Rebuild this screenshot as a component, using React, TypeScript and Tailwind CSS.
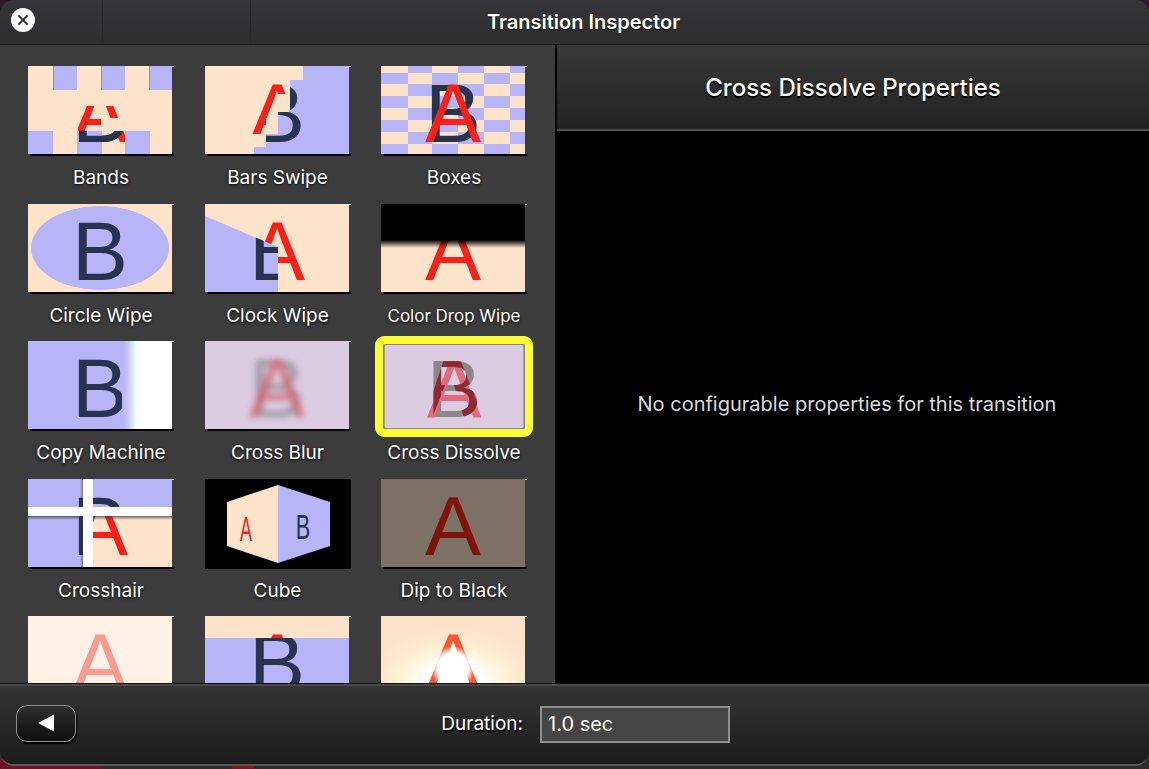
import React from "react";

const PEACH = "#fee3cb";
const LAV = "#b7b4f8";
const RED = "#f7211a";
const NAVY = "#283350";

function LetterA({ fill = RED, opacity = 1 }: { fill?: string; opacity?: number }) {
  return (
    <text x="72" y="76" textAnchor="middle" fontSize="84" fontFamily="'Liberation Sans', sans-serif" fill={fill} opacity={opacity}>
      A
    </text>
  );
}

function LetterB({ fill = NAVY, opacity = 1 }: { fill?: string; opacity?: number }) {
  return (
    <text x="72" y="76" textAnchor="middle" fontSize="84" fontFamily="'Liberation Sans', sans-serif" fill={fill} opacity={opacity}>
      B
    </text>
  );
}

function Bands() {
  const top = [25, 73, 121];
  const bottom = [0, 49, 97];
  return (
    <>
      <rect width="144" height="88" fill={PEACH} />
      <LetterB />
      <rect width="144" height="24" y="0" fill={LAV} />
      {[0, 49, 97].map((x) => (
        <rect key={x} x={x} y="0" width="25" height="24" fill={PEACH} />
      ))}
      <rect y="24" width="144" height="41" fill={PEACH} />
      <clipPath id="bandA">
        <rect x="0" y="0" width="50" height="52" />
        <rect x="73" y="40" width="50" height="12" />
        <rect x="73" y="65" width="50" height="23" />
        <rect x="50" y="40" width="23" height="48" />
      </clipPath>
      <g clipPath="url(#bandA)">
        <LetterA />
      </g>
      {bottom.map((x) => (
        <rect key={x} x={x} y="65" width="25" height="23" fill={LAV} />
      ))}
      {top.map((x) => (
        <rect key={x} x={x} y="0" width="1" height="24" fill="#8f8cc8" />
      ))}
      <clipPath id="bandB">
        <rect x="49" y="65" width="48" height="23" />
      </clipPath>
      <g clipPath="url(#bandB)">
        <LetterB />
      </g>
      <rect x="73" y="65" width="24" height="23" fill={PEACH} opacity="0" />
    </>
  );
}

function BarsSwipe() {
  return (
    <>
      <rect width="144" height="88" fill={LAV} />
      <LetterB />
      <path d="M0 0H98V14H85V46H73V68H61V81H49V88H0Z" fill={PEACH} />
      <clipPath id="barsA">
        <path d="M0 0H98V14H85V28H73V52H61V68H0Z" />
      </clipPath>
      <g clipPath="url(#barsA)">
        <LetterA />
      </g>
    </>
  );
}

function Boxes() {
  const xs = [0, 27, 51, 77, 103, 129];
  const ys = [0, 7, 18, 30, 42, 54, 66, 78];
  const widths = [27, 24, 26, 26, 26, 15];
  const heights = [7, 11, 12, 12, 12, 12, 12, 10];
  return (
    <>
      {ys.map((y, r) =>
        xs.map((x, c) => (
          <rect key={`${r}-${c}`} x={x} y={y} width={widths[c]} height={heights[r]} fill={(r + c) % 2 === 0 ? PEACH : LAV} />
        ))
      )}
      <LetterB />
      <LetterA />
    </>
  );
}

function CircleWipe() {
  return (
    <>
      <rect width="144" height="88" fill={PEACH} />
      <ellipse cx="72" cy="44" rx="69" ry="42" fill={LAV} />
      <LetterB />
    </>
  );
}

function ClockWipe() {
  return (
    <>
      <rect width="144" height="88" fill={PEACH} />
      <LetterA />
      <path d="M0 12L73 43V88H0Z" fill={LAV} />
      <clipPath id="clockB">
        <path d="M0 12L73 43V88H0Z" />
      </clipPath>
      <g clipPath="url(#clockB)">
        <LetterB />
      </g>
    </>
  );
}

function ColorDrop() {
  return (
    <>
      <defs>
        <linearGradient id="dropFade" x1="0" y1="0" x2="0" y2="1">
          <stop offset="0" stopColor="#000" />
          <stop offset="1" stopColor="#000" stopOpacity="0" />
        </linearGradient>
      </defs>
      <rect width="144" height="88" fill={PEACH} />
      <LetterA />
      <rect width="144" height="36" fill="#000" />
      <rect y="36" width="144" height="8" fill="url(#dropFade)" />
    </>
  );
}

function CopyMachine() {
  return (
    <>
      <defs>
        <linearGradient id="copyFade" x1="0" y1="0" x2="1" y2="0">
          <stop offset="0" stopColor={LAV} />
          <stop offset="0.3" stopColor="#c6c4fb" />
          <stop offset="0.75" stopColor="#eefcff" />
          <stop offset="1" stopColor="#fff" />
        </linearGradient>
      </defs>
      <rect width="144" height="88" fill={LAV} />
      <LetterB />
      <rect x="94" width="50" height="88" fill="#fff" />
      <rect x="94" width="18" height="88" fill="url(#copyFade)" />
    </>
  );
}

function CrossBlur() {
  return (
    <>
      <rect width="144" height="88" fill="#dbcce2" />
      <defs>
        <filter id="blurA" x="-20%" y="-20%" width="140%" height="140%">
          <feGaussianBlur stdDeviation="3.2" />
        </filter>
      </defs>
      <g filter="url(#blurA)">
        <LetterB fill="#8f8a92" opacity={0.75} />
        <LetterA fill="#d2606c" opacity={0.8} />
      </g>
    </>
  );
}

function CrossDissolve() {
  return (
    <>
      <rect width="142" height="86" fill="#dbcce2" />
      <g transform="translate(-1 -2)">
        <LetterB fill="#8c8789" />
        <LetterA fill="#e46a80" />
        <clipPath id="dissolveB">
          <path d="M62 16L42 76H50L68 30L82 76H102L78 16Z" />
        </clipPath>
        <g clipPath="url(#dissolveB)">
          <LetterB fill="#8e2a33" />
        </g>
      </g>
    </>
  );
}

function Crosshair() {
  return (
    <>
      <defs>
        <linearGradient id="hairShadow" x1="0" y1="0" x2="0" y2="1">
          <stop offset="0" stopColor="#333" stopOpacity="0.7" />
          <stop offset="1" stopColor="#333" stopOpacity="0" />
        </linearGradient>
        <linearGradient id="hairShadowV" x1="1" y1="0" x2="0" y2="0">
          <stop offset="0" stopColor="#333" stopOpacity="0.5" />
          <stop offset="1" stopColor="#333" stopOpacity="0" />
        </linearGradient>
        <clipPath id="hairA">
          <rect x="65" y="37" width="79" height="51" />
        </clipPath>
        <clipPath id="hairB">
          <rect x="0" y="0" width="55" height="88" />
          <rect x="55" y="0" width="89" height="37" />
        </clipPath>
      </defs>
      <rect width="144" height="88" fill={LAV} />
      <rect x="65" y="37" width="79" height="51" fill={PEACH} />
      <g clipPath="url(#hairB)">
        <LetterB />
      </g>
      <g clipPath="url(#hairA)">
        <LetterA />
      </g>
      <rect x="52" width="3" height="88" fill="url(#hairShadowV)" />
      <rect y="37" width="144" height="4" fill="url(#hairShadow)" />
      <rect y="28" width="144" height="9" fill="#fff" />
      <rect x="55" width="10" height="88" fill="#fff" />
    </>
  );
}

function Cube() {
  return (
    <>
      <rect width="147" height="90" fill="#000" />
      <path d="M73 6L22 23V67L73 84Z" fill={PEACH} />
      <path d="M73 6L125 23V67L73 84Z" fill={LAV} />
      <text x="41" y="62" textAnchor="middle" fontSize="36" fontFamily="'Liberation Sans', sans-serif" fill={RED} transform="translate(41 0) scale(0.5 1) translate(-41 0) translate(0 0)">
        A
      </text>
      <text x="98" y="60" textAnchor="middle" fontSize="36" fontFamily="'Liberation Sans', sans-serif" fill={NAVY} transform="translate(98 0) scale(0.6 1) translate(-98 0)">
        B
      </text>
    </>
  );
}

function DipToBlack() {
  return (
    <>
      <rect width="144" height="88" fill="#7d7065" />
      <LetterA fill="#7f1209" />
    </>
  );
}

function FadeRow() {
  return (
    <>
      <rect width="144" height="88" fill="#fff1e6" />
      <LetterA fill="#fc9b92" />
    </>
  );
}

function SlideRow() {
  return (
    <>
      <rect width="144" height="88" fill={PEACH} />
      <LetterA />
      <rect y="22" width="144" height="66" fill={LAV} />
      <clipPath id="slideB">
        <rect y="22" width="144" height="66" />
      </clipPath>
      <g clipPath="url(#slideB)">
        <LetterB />
      </g>
    </>
  );
}

function FlashRow() {
  return (
    <>
      <defs>
        <radialGradient id="flash" cx="0.5" cy="0.75" r="0.65">
          <stop offset="0" stopColor="#fff" />
          <stop offset="0.3" stopColor="#fff" />
          <stop offset="0.6" stopColor="#fff3d6" stopOpacity="0.9" />
          <stop offset="1" stopColor={PEACH} stopOpacity="0" />
        </radialGradient>
        <radialGradient id="flashCore" cx="0.5" cy="0.5" r="0.5">
          <stop offset="0" stopColor="#fff" />
          <stop offset="0.7" stopColor="#fff" />
          <stop offset="1" stopColor="#fff" stopOpacity="0" />
        </radialGradient>
      </defs>
      <rect width="144" height="88" fill={PEACH} />
      <rect width="144" height="88" fill="url(#flash)" />
      <LetterA fill="#f9552f" />
      <circle cx="72" cy="52" r="22" fill="url(#flashCore)" />
      <rect x="60" y="60" width="24" height="10" fill="#fff" />
    </>
  );
}

const items: { name: string; art: React.ReactNode; small?: boolean; selected?: boolean; full?: boolean }[] = [
  { name: "Bands", art: <Bands /> },
  { name: "Bars Swipe", art: <BarsSwipe /> },
  { name: "Boxes", art: <Boxes /> },
  { name: "Circle Wipe", art: <CircleWipe /> },
  { name: "Clock Wipe", art: <ClockWipe /> },
  { name: "Color Drop Wipe", art: <ColorDrop />, small: true },
  { name: "Copy Machine", art: <CopyMachine /> },
  { name: "Cross Blur", art: <CrossBlur /> },
  { name: "Cross Dissolve", art: <CrossDissolve />, selected: true },
  { name: "Crosshair", art: <Crosshair /> },
  { name: "Cube", art: <Cube />, full: true },
  { name: "Dip to Black", art: <DipToBlack /> },
  { name: "Fade In", art: <FadeRow /> },
  { name: "Slide", art: <SlideRow /> },
  { name: "Flash", art: <FlashRow /> },
];

function Thumb({ item }: { item: (typeof items)[number] }) {
  if (item.selected) {
    return (
      <div className="relative w-[146px] h-[90px]">
        <div className="absolute left-[-6px] top-[-5px] w-[158px] h-[101px] rounded-[9px] border-[8px] border-[#fdfb33] bg-[#8b8590] p-px">
          <svg viewBox="0 0 142 85" className="w-full h-full rounded-[2px] block">
            {item.art}
          </svg>
        </div>
      </div>
    );
  }
  return (
    <div className="relative w-[146px] h-[90px]">
      <svg viewBox={item.full ? "0 0 146 90" : "0 0 144 88"} className={item.full ? "w-[146px] h-[90px] block" : "w-[144px] h-[88px] block"}>
        {item.art}
      </svg>
      {!item.full && (
        <>
          <div className="absolute left-[2px] right-0 bottom-0 h-[2px] bg-black" />
          <div className="absolute right-0 top-0 w-[2px] h-px bg-[#e8e8f0]" />
        </>
      )}
    </div>
  );
}

export default function App() {
  return (
    <div className="w-[1149px] h-[769px] overflow-hidden bg-[#2a1a2a] relative" style={{ fontFamily: "Inter, 'Noto Sans', sans-serif" }}>
      {/* bits of the desktop behind the window */}
      <div className="absolute left-0 right-0 bottom-0 h-[12px] bg-[#2b2b2b]" />
      <div className="absolute left-0 bottom-0 w-[102px] h-[12px] bg-[#6e0f2a]" />
      <div className="absolute left-[232px] bottom-0 w-[22px] h-[5px] bg-[#7d1420]" />

      <div className="relative w-[1149px] h-[766px] rounded-[14px] rounded-tr-[14px] overflow-hidden flex flex-col border-b-[2px] border-[#5a5a5a] bg-[#2c2c2c]">
        {/* title bar */}
        <header className="relative h-[45px] shrink-0 flex items-center justify-center bg-gradient-to-b from-[#353438] to-[#2e2e2e] border-b border-[#1b1b1b]">
          <button className="absolute left-[11px] top-[8px] w-[24px] h-[24px] rounded-full bg-white flex items-center justify-center">
            <svg width="12" height="12" viewBox="0 0 12 12">
              <path d="M2 2L10 10M10 2L2 10" stroke="#2c2c2c" strokeWidth="1.8" strokeLinecap="round" />
            </svg>
          </button>
          <div className="absolute left-[102px] top-0 h-full w-px bg-[#2a2a2a]" />
          <div className="absolute left-[250px] top-0 h-full w-px bg-[#2a2a2a]" />
          <h1 className="text-[20px] font-semibold text-white [text-shadow:0_1px_1px_#000] ml-[18px] mt-[-1px]">
            Transition Inspector
          </h1>
        </header>

        <div className="flex flex-1 min-h-0">
          {/* transition grid */}
          <div className="w-[555px] shrink-0 h-[639px] overflow-hidden bg-[#3c3c3c] pl-[28px] pt-[21px]">
            <div className="grid grid-cols-[176.5px_176.5px_176.5px] auto-rows-[137.6px]">
              {items.map((item) => (
                <div key={item.name} className="flex flex-col w-[146px]">
                  <Thumb item={item} />
                  <div
                    className={`flex-none mt-[9px] w-[146px] whitespace-nowrap text-center text-white leading-[26px] [text-shadow:0_1px_3px_#000] ${
                      item.small ? "text-[17px]" : "text-[19px]"
                    } ${item.selected ? "" : ""}`}
                  >
                    {item.name}
                  </div>
                </div>
              ))}
            </div>
          </div>

          <div className="w-[2px] shrink-0 bg-black" />

          {/* properties */}
          <div className="flex-1 flex flex-col bg-black">
            <div className="h-[86px] shrink-0 flex items-center justify-center bg-gradient-to-b from-[#383838] to-[#222222] border-b-[2px] border-[#4d4d4d]">
              <h2 className="text-[24px] font-medium text-white [text-shadow:0_2px_1px_#000] mt-[2px]">
                Cross Dissolve Properties
              </h2>
            </div>
            <div className="flex-1 flex items-center justify-center pb-[8px]">
              <p className="text-[20px] text-[#dcdcdc] mr-[12px]">No configurable properties for this transition</p>
            </div>
          </div>
        </div>

        {/* footer */}
        <footer className="h-[80px] shrink-0 relative flex items-center bg-gradient-to-b from-[#343434] to-[#1c1c1c] border-t-[2px] border-[#4a4a4a] shadow-[0_-1px_0_#111]">
          <button className="ml-[16px] mt-[-4px] w-[60px] h-[37px] rounded-[11px] border-[1.5px] border-[#8e8e8e] bg-gradient-to-b from-[#2e2e2e] to-[#0f0f0f] shadow-[1px_2px_1px_#000] flex items-center justify-center">
            <svg width="18" height="18" viewBox="0 0 18 18">
              <path d="M1 9L17 0.5V17.5Z" fill="#fff" />
            </svg>
          </button>
          <div className="ml-auto mr-[419px] mt-[-2px] flex items-center gap-[17px]">
            <span className="text-[19px] text-white [text-shadow:1px_2px_1px_#000]">Duration:</span>
            <div className="w-[190px] h-[37px] border-2 border-[#8e8e8e] bg-[#454545] px-[6px] flex items-center text-[20px] text-white">
              1.0 sec
            </div>
          </div>
        </footer>
      </div>
    </div>
  );
}
